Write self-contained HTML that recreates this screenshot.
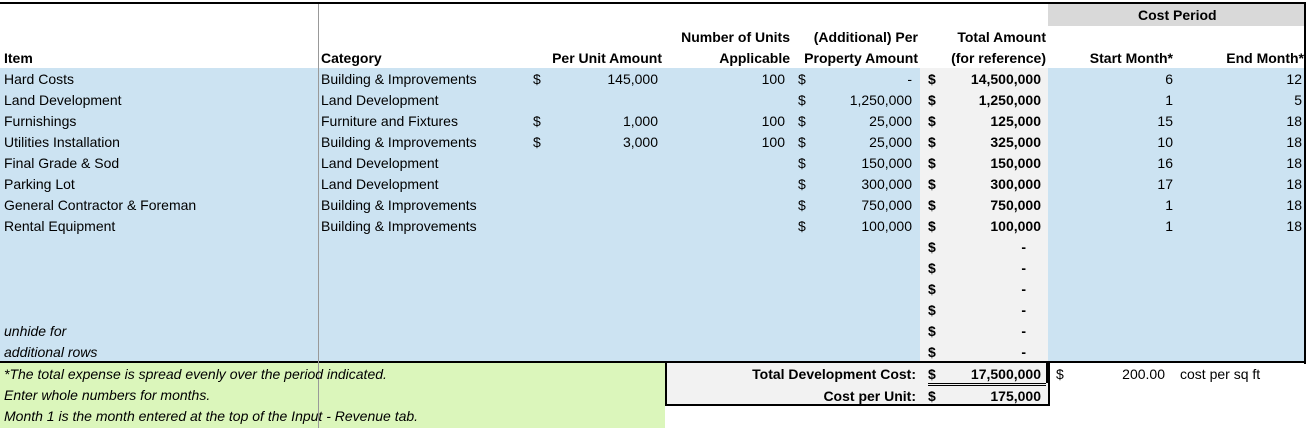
<!DOCTYPE html>
<html><head><meta charset="utf-8"><style>
body{margin:0;width:1312px;height:428px;background:#fff;position:relative;overflow:hidden;font-family:"Liberation Sans",Arial,sans-serif;font-size:14px;color:#000}
div{position:absolute}
.t{white-space:nowrap;line-height:21px;height:21px;padding-top:1px}
.b{font-weight:bold}
.i{font-style:italic}
</style></head><body>
<div style="left:0;top:68px;width:1304px;height:294px;background:#cce3f2"></div>
<div style="left:920px;top:68px;width:128px;height:294px;background:#f2f2f2"></div>
<div style="left:1048px;top:3px;width:256px;height:23px;background:#d9d9d9"></div>
<div style="left:0;top:363px;width:665px;height:65px;background:#dbf6bb"></div>
<div style="left:665px;top:362px;width:381px;height:42px;background:#f2f2f2;border:2px solid #000;border-top:0"></div>
<div style="left:0;top:2px;width:1306px;height:2px;background:#000"></div>
<div style="left:1304px;top:2px;width:2px;height:362px;background:#000"></div>
<div style="left:0;top:361px;width:1306px;height:2px;background:#000"></div>
<div style="left:318px;top:4px;width:1px;height:424px;background:#999"></div>
<div style="left:928px;top:383px;width:118px;height:3px;border-top:1px solid #000;border-bottom:1px solid #000;box-sizing:border-box"></div>
<div style="left:1046px;top:363px;width:2px;height:20px;background:#000"></div>

<div class="t b" style="left:1138px;top:4px">Cost Period</div>
<div class="t b" style="right:522px;top:26px">Number of Units</div>
<div class="t b" style="right:394px;top:26px">(Additional) Per</div>
<div class="t b" style="right:266px;top:26px">Total Amount</div>
<div class="t b" style="left:4px;top:47px">Item</div>
<div class="t b" style="left:321px;top:47px">Category</div>
<div class="t b" style="right:650px;top:47px">Per Unit Amount</div>
<div class="t b" style="right:522px;top:47px">Applicable</div>
<div class="t b" style="right:394px;top:47px">Property Amount</div>
<div class="t b" style="right:266px;top:47px">(for reference)</div>
<div class="t b" style="right:139px;top:47px">Start Month*</div>
<div class="t b" style="right:8px;top:47px">End Month*</div>

<div class="t" style="left:4px;top:68px">Hard Costs</div>
<div class="t" style="left:4px;top:89px">Land Development</div>
<div class="t" style="left:4px;top:110px">Furnishings</div>
<div class="t" style="left:4px;top:131px">Utilities Installation</div>
<div class="t" style="left:4px;top:152px">Final Grade &amp; Sod</div>
<div class="t" style="left:4px;top:173px">Parking Lot</div>
<div class="t" style="left:4px;top:194px">General Contractor &amp; Foreman</div>
<div class="t" style="left:4px;top:215px">Rental Equipment</div>
<div class="t i" style="left:4px;top:320px">unhide for</div>
<div class="t i" style="left:4px;top:341px">additional rows</div>

<div class="t" style="left:321px;top:68px">Building &amp; Improvements</div>
<div class="t" style="left:321px;top:89px">Land Development</div>
<div class="t" style="left:321px;top:110px">Furniture and Fixtures</div>
<div class="t" style="left:321px;top:131px">Building &amp; Improvements</div>
<div class="t" style="left:321px;top:152px">Land Development</div>
<div class="t" style="left:321px;top:173px">Land Development</div>
<div class="t" style="left:321px;top:194px">Building &amp; Improvements</div>
<div class="t" style="left:321px;top:215px">Building &amp; Improvements</div>

<div class="t" style="left:533px;top:68px">$</div><div class="t" style="right:654px;top:68px">145,000</div>
<div class="t" style="left:533px;top:110px">$</div><div class="t" style="right:654px;top:110px">1,000</div>
<div class="t" style="left:533px;top:131px">$</div><div class="t" style="right:654px;top:131px">3,000</div>

<div class="t" style="right:527px;top:68px">100</div>
<div class="t" style="right:527px;top:110px">100</div>
<div class="t" style="right:527px;top:131px">100</div>

<div class="t" style="left:798px;top:68px">$</div><div class="t" style="right:400px;top:68px">-</div>
<div class="t" style="left:798px;top:89px">$</div><div class="t" style="right:400px;top:89px">1,250,000</div>
<div class="t" style="left:798px;top:110px">$</div><div class="t" style="right:400px;top:110px">25,000</div>
<div class="t" style="left:798px;top:131px">$</div><div class="t" style="right:400px;top:131px">25,000</div>
<div class="t" style="left:798px;top:152px">$</div><div class="t" style="right:400px;top:152px">150,000</div>
<div class="t" style="left:798px;top:173px">$</div><div class="t" style="right:400px;top:173px">300,000</div>
<div class="t" style="left:798px;top:194px">$</div><div class="t" style="right:400px;top:194px">750,000</div>
<div class="t" style="left:798px;top:215px">$</div><div class="t" style="right:400px;top:215px">100,000</div>

<div class="t b" style="left:928px;top:68px">$</div><div class="t b" style="right:271px;top:68px">14,500,000</div>
<div class="t b" style="left:928px;top:89px">$</div><div class="t b" style="right:271px;top:89px">1,250,000</div>
<div class="t b" style="left:928px;top:110px">$</div><div class="t b" style="right:271px;top:110px">125,000</div>
<div class="t b" style="left:928px;top:131px">$</div><div class="t b" style="right:271px;top:131px">325,000</div>
<div class="t b" style="left:928px;top:152px">$</div><div class="t b" style="right:271px;top:152px">150,000</div>
<div class="t b" style="left:928px;top:173px">$</div><div class="t b" style="right:271px;top:173px">300,000</div>
<div class="t b" style="left:928px;top:194px">$</div><div class="t b" style="right:271px;top:194px">750,000</div>
<div class="t b" style="left:928px;top:215px">$</div><div class="t b" style="right:271px;top:215px">100,000</div>
<div class="t b" style="left:928px;top:236px">$</div><div class="t b" style="right:286px;top:236px">-</div>
<div class="t b" style="left:928px;top:257px">$</div><div class="t b" style="right:286px;top:257px">-</div>
<div class="t b" style="left:928px;top:278px">$</div><div class="t b" style="right:286px;top:278px">-</div>
<div class="t b" style="left:928px;top:299px">$</div><div class="t b" style="right:286px;top:299px">-</div>
<div class="t b" style="left:928px;top:320px">$</div><div class="t b" style="right:286px;top:320px">-</div>
<div class="t b" style="left:928px;top:341px">$</div><div class="t b" style="right:286px;top:341px">-</div>

<div class="t" style="right:139px;top:68px">6</div><div class="t" style="right:10px;top:68px">12</div>
<div class="t" style="right:139px;top:89px">1</div><div class="t" style="right:10px;top:89px">5</div>
<div class="t" style="right:139px;top:110px">15</div><div class="t" style="right:10px;top:110px">18</div>
<div class="t" style="right:139px;top:131px">10</div><div class="t" style="right:10px;top:131px">18</div>
<div class="t" style="right:139px;top:152px">16</div><div class="t" style="right:10px;top:152px">18</div>
<div class="t" style="right:139px;top:173px">17</div><div class="t" style="right:10px;top:173px">18</div>
<div class="t" style="right:139px;top:194px">1</div><div class="t" style="right:10px;top:194px">18</div>
<div class="t" style="right:139px;top:215px">1</div><div class="t" style="right:10px;top:215px">18</div>

<div class="t i" style="left:4px;top:363px">*The total expense is spread evenly over the period indicated.</div>
<div class="t i" style="left:4px;top:384px">Enter whole numbers for months.</div>
<div class="t i" style="left:4px;top:405px">Month 1 is the month entered at the top of the Input - Revenue tab.</div>

<div class="t b" style="right:396px;top:363px">Total Development Cost:</div>
<div class="t b" style="left:928px;top:363px">$</div><div class="t b" style="right:271px;top:363px">17,500,000</div>
<div class="t b" style="right:396px;top:385px">Cost per Unit:</div>
<div class="t b" style="left:928px;top:385px">$</div><div class="t b" style="right:271px;top:385px">175,000</div>
<div class="t" style="left:1056px;top:363px">$</div>
<div class="t" style="right:147px;top:363px">200.00</div>
<div class="t" style="left:1180px;top:363px">cost per sq ft</div>
</body></html>
